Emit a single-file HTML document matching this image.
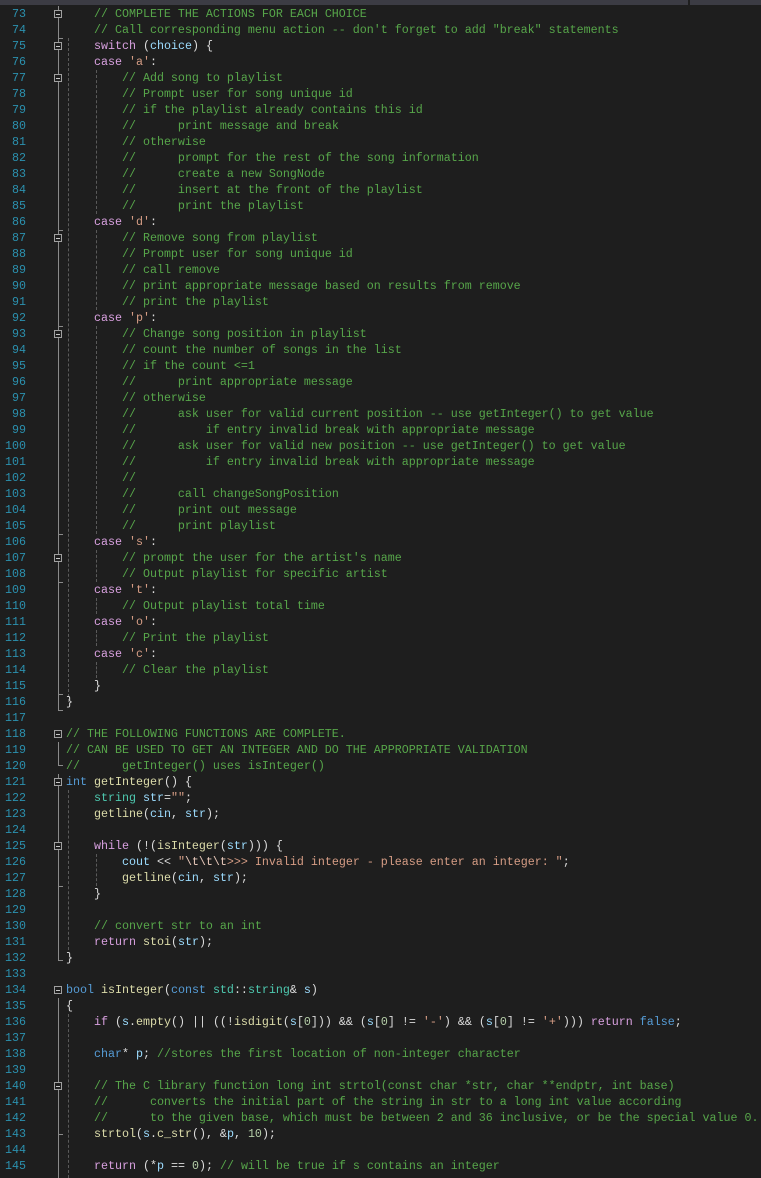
<!DOCTYPE html>
<html><head><meta charset="utf-8"><style>
html,body{margin:0;padding:0;background:#1e1e1e;width:761px;height:1178px;overflow:hidden;position:relative}
#top{position:absolute;left:0;top:0;width:761px;height:5px;background:#3c3c44}
#top2{position:absolute;left:688px;top:0;width:2px;height:5px;background:#1e1e1e}
.l{position:absolute;left:0;height:16px;width:761px;font-family:"Liberation Mono",monospace;font-size:11.67px;line-height:16px;white-space:pre;color:#dcdcdc}
.n{position:absolute;left:0;width:26px;text-align:right;color:#2b91af}
.x{position:absolute;left:66px}
.c{color:#57a64a}.k{color:#d8a0df}.b{color:#569cd6}.s{color:#d69d85}.f{color:#dcdcaa}.v{color:#9cdcfe}.t{color:#4ec9b0}.m{color:#b5cea8}.e{color:#e8c9bb}
.box{position:absolute;left:54px;width:8px;height:8px;border:1px solid #a0a0a0;background:#1e1e1e;box-sizing:border-box;z-index:2}
.box:after{content:"";position:absolute;left:1px;top:3px;width:4px;height:1px;background:#c8c8c8}
.fl{position:absolute;left:58px;width:1px;background:#8a8a8a}
.tk{position:absolute;left:58px;width:5px;height:1px;background:#8a8a8a}
.g{position:absolute;width:0;border-left:1px dashed #5a5a5a}
</style></head><body>
<div id="top"></div><div id="top2"></div>
<!-- fold lines -->
<div class="fl" style="top:6px;height:705px"></div><div class="tk" style="top:710px"></div>
<div class="tk" style="top:38px"></div>
<div class="tk" style="top:230px"></div><div class="tk" style="top:326px"></div><div class="tk" style="top:534px"></div><div class="tk" style="top:582px"></div><div class="tk" style="top:694px"></div>
<div class="fl" style="top:742px;height:23px"></div><div class="tk" style="top:765px"></div>
<div class="fl" style="top:774px;height:187px"></div><div class="tk" style="top:960px"></div><div class="tk" style="top:886px"></div>
<div class="fl" style="top:998px;height:180px"></div><div class="tk" style="top:1134px"></div>
<!-- guides -->
<div class="g" style="left:68px;top:38px;height:664px"></div>
<div class="g" style="left:96px;top:70px;height:144px"></div>
<div class="g" style="left:96px;top:230px;height:80px"></div>
<div class="g" style="left:96px;top:326px;height:208px"></div>
<div class="g" style="left:96px;top:550px;height:32px"></div>
<div class="g" style="left:96px;top:598px;height:16px"></div>
<div class="g" style="left:96px;top:630px;height:16px"></div>
<div class="g" style="left:96px;top:662px;height:16px"></div>
<div class="g" style="left:68px;top:790px;height:160px"></div>
<div class="g" style="left:96px;top:854px;height:32px"></div>
<div class="g" style="left:68px;top:1014px;height:164px"></div>
<!-- boxes -->
<div class="box" style="top:10px"></div><div class="box" style="top:42px"></div><div class="box" style="top:74px"></div><div class="box" style="top:234px"></div><div class="box" style="top:330px"></div><div class="box" style="top:554px"></div><div class="box" style="top:730px"></div><div class="box" style="top:778px"></div><div class="box" style="top:842px"></div><div class="box" style="top:986px"></div><div class="box" style="top:1082px"></div>

<div class="l" style="top:6px"><span class="n">73</span><span class="x">    <span class="c">// COMPLETE THE ACTIONS FOR EACH CHOICE</span></span></div>
<div class="l" style="top:22px"><span class="n">74</span><span class="x">    <span class="c">// Call corresponding menu action -- don't forget to add "break" statements</span></span></div>
<div class="l" style="top:38px"><span class="n">75</span><span class="x">    <span class="k">switch</span> (<span class="v">choice</span>) {</span></div>
<div class="l" style="top:54px"><span class="n">76</span><span class="x">    <span class="k">case</span> <span class="s">'a'</span>:</span></div>
<div class="l" style="top:70px"><span class="n">77</span><span class="x">        <span class="c">// Add song to playlist</span></span></div>
<div class="l" style="top:86px"><span class="n">78</span><span class="x">        <span class="c">// Prompt user for song unique id</span></span></div>
<div class="l" style="top:102px"><span class="n">79</span><span class="x">        <span class="c">// if the playlist already contains this id</span></span></div>
<div class="l" style="top:118px"><span class="n">80</span><span class="x">        <span class="c">//      print message and break</span></span></div>
<div class="l" style="top:134px"><span class="n">81</span><span class="x">        <span class="c">// otherwise</span></span></div>
<div class="l" style="top:150px"><span class="n">82</span><span class="x">        <span class="c">//      prompt for the rest of the song information</span></span></div>
<div class="l" style="top:166px"><span class="n">83</span><span class="x">        <span class="c">//      create a new SongNode</span></span></div>
<div class="l" style="top:182px"><span class="n">84</span><span class="x">        <span class="c">//      insert at the front of the playlist</span></span></div>
<div class="l" style="top:198px"><span class="n">85</span><span class="x">        <span class="c">//      print the playlist</span></span></div>
<div class="l" style="top:214px"><span class="n">86</span><span class="x">    <span class="k">case</span> <span class="s">'d'</span>:</span></div>
<div class="l" style="top:230px"><span class="n">87</span><span class="x">        <span class="c">// Remove song from playlist</span></span></div>
<div class="l" style="top:246px"><span class="n">88</span><span class="x">        <span class="c">// Prompt user for song unique id</span></span></div>
<div class="l" style="top:262px"><span class="n">89</span><span class="x">        <span class="c">// call remove</span></span></div>
<div class="l" style="top:278px"><span class="n">90</span><span class="x">        <span class="c">// print appropriate message based on results from remove</span></span></div>
<div class="l" style="top:294px"><span class="n">91</span><span class="x">        <span class="c">// print the playlist</span></span></div>
<div class="l" style="top:310px"><span class="n">92</span><span class="x">    <span class="k">case</span> <span class="s">'p'</span>:</span></div>
<div class="l" style="top:326px"><span class="n">93</span><span class="x">        <span class="c">// Change song position in playlist</span></span></div>
<div class="l" style="top:342px"><span class="n">94</span><span class="x">        <span class="c">// count the number of songs in the list</span></span></div>
<div class="l" style="top:358px"><span class="n">95</span><span class="x">        <span class="c">// if the count &lt;=1</span></span></div>
<div class="l" style="top:374px"><span class="n">96</span><span class="x">        <span class="c">//      print appropriate message</span></span></div>
<div class="l" style="top:390px"><span class="n">97</span><span class="x">        <span class="c">// otherwise</span></span></div>
<div class="l" style="top:406px"><span class="n">98</span><span class="x">        <span class="c">//      ask user for valid current position -- use getInteger() to get value</span></span></div>
<div class="l" style="top:422px"><span class="n">99</span><span class="x">        <span class="c">//          if entry invalid break with appropriate message</span></span></div>
<div class="l" style="top:438px"><span class="n">100</span><span class="x">        <span class="c">//      ask user for valid new position -- use getInteger() to get value</span></span></div>
<div class="l" style="top:454px"><span class="n">101</span><span class="x">        <span class="c">//          if entry invalid break with appropriate message</span></span></div>
<div class="l" style="top:470px"><span class="n">102</span><span class="x">        <span class="c">//</span></span></div>
<div class="l" style="top:486px"><span class="n">103</span><span class="x">        <span class="c">//      call changeSongPosition</span></span></div>
<div class="l" style="top:502px"><span class="n">104</span><span class="x">        <span class="c">//      print out message</span></span></div>
<div class="l" style="top:518px"><span class="n">105</span><span class="x">        <span class="c">//      print playlist</span></span></div>
<div class="l" style="top:534px"><span class="n">106</span><span class="x">    <span class="k">case</span> <span class="s">'s'</span>:</span></div>
<div class="l" style="top:550px"><span class="n">107</span><span class="x">        <span class="c">// prompt the user for the artist's name</span></span></div>
<div class="l" style="top:566px"><span class="n">108</span><span class="x">        <span class="c">// Output playlist for specific artist</span></span></div>
<div class="l" style="top:582px"><span class="n">109</span><span class="x">    <span class="k">case</span> <span class="s">'t'</span>:</span></div>
<div class="l" style="top:598px"><span class="n">110</span><span class="x">        <span class="c">// Output playlist total time</span></span></div>
<div class="l" style="top:614px"><span class="n">111</span><span class="x">    <span class="k">case</span> <span class="s">'o'</span>:</span></div>
<div class="l" style="top:630px"><span class="n">112</span><span class="x">        <span class="c">// Print the playlist</span></span></div>
<div class="l" style="top:646px"><span class="n">113</span><span class="x">    <span class="k">case</span> <span class="s">'c'</span>:</span></div>
<div class="l" style="top:662px"><span class="n">114</span><span class="x">        <span class="c">// Clear the playlist</span></span></div>
<div class="l" style="top:678px"><span class="n">115</span><span class="x">    }</span></div>
<div class="l" style="top:694px"><span class="n">116</span><span class="x">}</span></div>
<div class="l" style="top:710px"><span class="n">117</span></div>
<div class="l" style="top:726px"><span class="n">118</span><span class="x"><span class="c">// THE FOLLOWING FUNCTIONS ARE COMPLETE.</span></span></div>
<div class="l" style="top:742px"><span class="n">119</span><span class="x"><span class="c">// CAN BE USED TO GET AN INTEGER AND DO THE APPROPRIATE VALIDATION</span></span></div>
<div class="l" style="top:758px"><span class="n">120</span><span class="x"><span class="c">//      getInteger() uses isInteger()</span></span></div>
<div class="l" style="top:774px"><span class="n">121</span><span class="x"><span class="b">int</span> <span class="f">getInteger</span>() {</span></div>
<div class="l" style="top:790px"><span class="n">122</span><span class="x">    <span class="t">string</span> <span class="v">str</span>=<span class="s">""</span>;</span></div>
<div class="l" style="top:806px"><span class="n">123</span><span class="x">    <span class="f">getline</span>(<span class="v">cin</span>, <span class="v">str</span>);</span></div>
<div class="l" style="top:822px"><span class="n">124</span></div>
<div class="l" style="top:838px"><span class="n">125</span><span class="x">    <span class="k">while</span> (!(<span class="f">isInteger</span>(<span class="v">str</span>))) {</span></div>
<div class="l" style="top:854px"><span class="n">126</span><span class="x">        <span class="v">cout</span> &lt;&lt; <span class="s">"<span class="e">\t\t\t</span>&gt;&gt;&gt; Invalid integer - please enter an integer: "</span>;</span></div>
<div class="l" style="top:870px"><span class="n">127</span><span class="x">        <span class="f">getline</span>(<span class="v">cin</span>, <span class="v">str</span>);</span></div>
<div class="l" style="top:886px"><span class="n">128</span><span class="x">    }</span></div>
<div class="l" style="top:902px"><span class="n">129</span></div>
<div class="l" style="top:918px"><span class="n">130</span><span class="x">    <span class="c">// convert str to an int</span></span></div>
<div class="l" style="top:934px"><span class="n">131</span><span class="x">    <span class="k">return</span> <span class="f">stoi</span>(<span class="v">str</span>);</span></div>
<div class="l" style="top:950px"><span class="n">132</span><span class="x">}</span></div>
<div class="l" style="top:966px"><span class="n">133</span></div>
<div class="l" style="top:982px"><span class="n">134</span><span class="x"><span class="b">bool</span> <span class="f">isInteger</span>(<span class="b">const</span> <span class="t">std</span>::<span class="t">string</span>&amp; <span class="v">s</span>)</span></div>
<div class="l" style="top:998px"><span class="n">135</span><span class="x">{</span></div>
<div class="l" style="top:1014px"><span class="n">136</span><span class="x">    <span class="k">if</span> (<span class="v">s</span>.<span class="f">empty</span>() || ((!<span class="f">isdigit</span>(<span class="v">s</span>[<span class="m">0</span>])) &amp;&amp; (<span class="v">s</span>[<span class="m">0</span>] != <span class="s">'-'</span>) &amp;&amp; (<span class="v">s</span>[<span class="m">0</span>] != <span class="s">'+'</span>))) <span class="k">return</span> <span class="b">false</span>;</span></div>
<div class="l" style="top:1030px"><span class="n">137</span></div>
<div class="l" style="top:1046px"><span class="n">138</span><span class="x">    <span class="b">char</span>* <span class="v">p</span>; <span class="c">//stores the first location of non-integer character</span></span></div>
<div class="l" style="top:1062px"><span class="n">139</span></div>
<div class="l" style="top:1078px"><span class="n">140</span><span class="x">    <span class="c">// The C library function long int strtol(const char *str, char **endptr, int base)</span></span></div>
<div class="l" style="top:1094px"><span class="n">141</span><span class="x">    <span class="c">//      converts the initial part of the string in str to a long int value according</span></span></div>
<div class="l" style="top:1110px"><span class="n">142</span><span class="x">    <span class="c">//      to the given base, which must be between 2 and 36 inclusive, or be the special value 0.</span></span></div>
<div class="l" style="top:1126px"><span class="n">143</span><span class="x">    <span class="f">strtol</span>(<span class="v">s</span>.<span class="f">c_str</span>(), &amp;<span class="v">p</span>, <span class="m">10</span>);</span></div>
<div class="l" style="top:1142px"><span class="n">144</span></div>
<div class="l" style="top:1158px"><span class="n">145</span><span class="x">    <span class="k">return</span> (*<span class="v">p</span> == <span class="m">0</span>); <span class="c">// will be true if s contains an integer</span></span></div>
</body></html>
